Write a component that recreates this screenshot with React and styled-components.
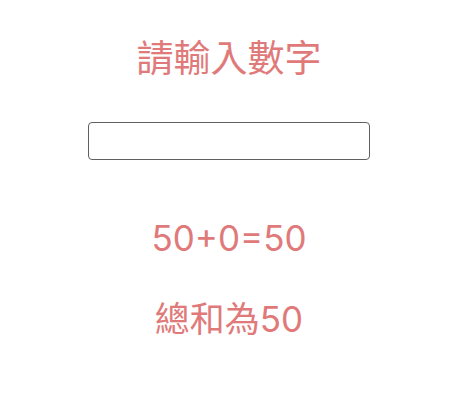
import React, { useState } from "react";
import styled, { createGlobalStyle } from "styled-components";

const Global = createGlobalStyle`
  html, body { margin: 0; padding: 0; background: #ffffff; }
  body { font-family: Inter, "Noto Sans CJK TC", sans-serif; }
`;

const Page = styled.div`
  width: 458px;
  display: flex;
  flex-direction: column;
  align-items: center;
  padding-top: 38px;
`;

const Title = styled.h1`
  margin: 0;
  font-size: 37px;
  font-weight: 400;
  line-height: 42px;
  color: #e07a7a;
`;

const NumberInput = styled.input`
  box-sizing: border-box;
  margin-top: 42px;
  width: 282px;
  height: 38px;
  border: 1px solid #606060;
  border-radius: 4px;
  background: #fff;
  font-size: 20px;
  padding: 0 8px;
  outline: none;
`;

const Line = styled.p`
  margin: ${(p) => p.$top}px 0 0;
  font-size: 35px;
  line-height: 42px;
  font-weight: 400;
  color: #e07a7a;
`;

export default function App() {
  const [value, setValue] = useState("");
  const a = 50;
  const b = Number(value) || 0;
  return (
    <>
      <Global />
      <Page>
        <Title>請輸入數字</Title>
        <NumberInput value={value} onChange={(e) => setValue(e.target.value)} />
        <Line $top={57}>{`${a}+${b}=${a + b}`}</Line>
        <Line $top={39}>總和為{a + b}</Line>
      </Page>
    </>
  );
}
